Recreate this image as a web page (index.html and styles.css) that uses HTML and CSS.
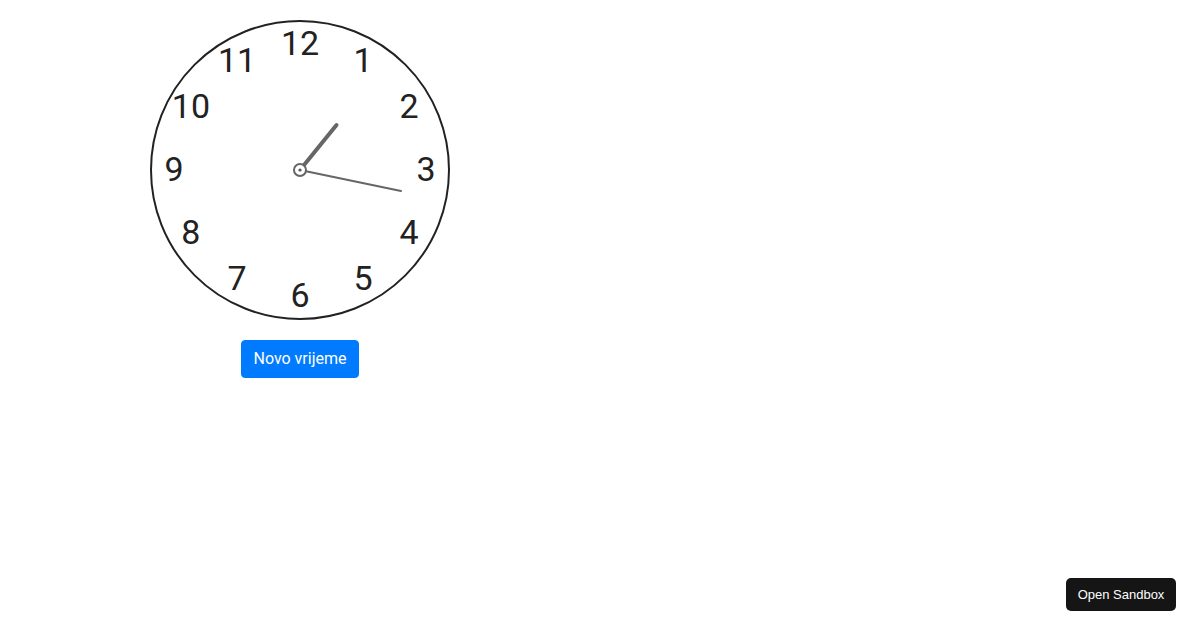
FILE: index.html
```html
<!DOCTYPE html>
<html lang="hr">
<head>
<meta charset="utf-8">
<title>Sat</title>
<link rel="stylesheet" href="styles.css">
</head>
<body>
<div class="app">
  <div class="clock">
    <span class="num" style="left:150px;top:24px">12</span>
    <span class="num" style="left:213px;top:40.9px">1</span>
    <span class="num" style="left:259.1px;top:87px">2</span>
    <span class="num" style="left:276px;top:150px">3</span>
    <span class="num" style="left:259.1px;top:213px">4</span>
    <span class="num" style="left:213px;top:259.1px">5</span>
    <span class="num" style="left:150px;top:276px">6</span>
    <span class="num" style="left:87px;top:259.1px">7</span>
    <span class="num" style="left:40.9px;top:213px">8</span>
    <span class="num" style="left:24px;top:150px">9</span>
    <span class="num" style="left:40.9px;top:87px">10</span>
    <span class="num" style="left:87px;top:40.9px">11</span>
    <svg class="hands" width="300" height="300" viewBox="0 0 300 300">
      <line x1="150" y1="150" x2="186.5" y2="105" class="hour"/>
      <line x1="150" y1="150" x2="251" y2="171" class="minute"/>
      <circle cx="150" cy="150" r="6" class="pivot"/>
      <circle cx="150" cy="150" r="1.6" class="dot"/>
    </svg>
  </div>
  <button class="btn">Novo vrijeme</button>
</div>
<button class="sandbox">Open Sandbox</button>
</body>
</html>
```
FILE: styles.css
```css
html, body {
  margin: 0;
  padding: 0;
  background: #fff;
}
body {
  font-family: Roboto, "Liberation Sans", Arial, sans-serif;
}
.app {
  width: 600px;
  padding-top: 20px;
  display: flex;
  flex-direction: column;
  align-items: center;
  gap: 20px;
}
.clock {
  position: relative;
  width: 300px;
  height: 300px;
  box-sizing: border-box;
  border: 2px solid #222;
  border-radius: 50%;
}
.num {
  position: absolute;
  transform: translate(-50%, -50%);
  margin-left: -2px;
  margin-top: -3px;
  font-size: 34px;
  line-height: 1;
  color: #222;
  font-family: Roboto, "Liberation Sans", sans-serif;
}
.hands {
  position: absolute;
  left: -2px;
  top: -2px;
}
.hour {
  stroke: #666;
  stroke-width: 4;
  stroke-linecap: round;
}
.minute {
  stroke: #666;
  stroke-width: 2;
  stroke-linecap: round;
}
.pivot {
  fill: #fff;
  stroke: #666;
  stroke-width: 2;
}
.dot {
  fill: #555;
}
.btn {
  font-family: Roboto, "Liberation Sans", sans-serif;
  font-size: 16px;
  line-height: 24px;
  color: #fff;
  background: #007bff;
  border: 1px solid #007bff;
  border-radius: 4px;
  width: 118px;
  padding: 6px 0;
  cursor: pointer;
}
.sandbox {
  position: fixed;
  right: 24px;
  bottom: 19px;
  width: 110px;
  height: 33px;
  background: #151515;
  color: #fff;
  border: none;
  border-radius: 5px;
  font-family: "Liberation Sans", Arial, sans-serif;
  font-size: 13px;
  padding: 0;
}
```
